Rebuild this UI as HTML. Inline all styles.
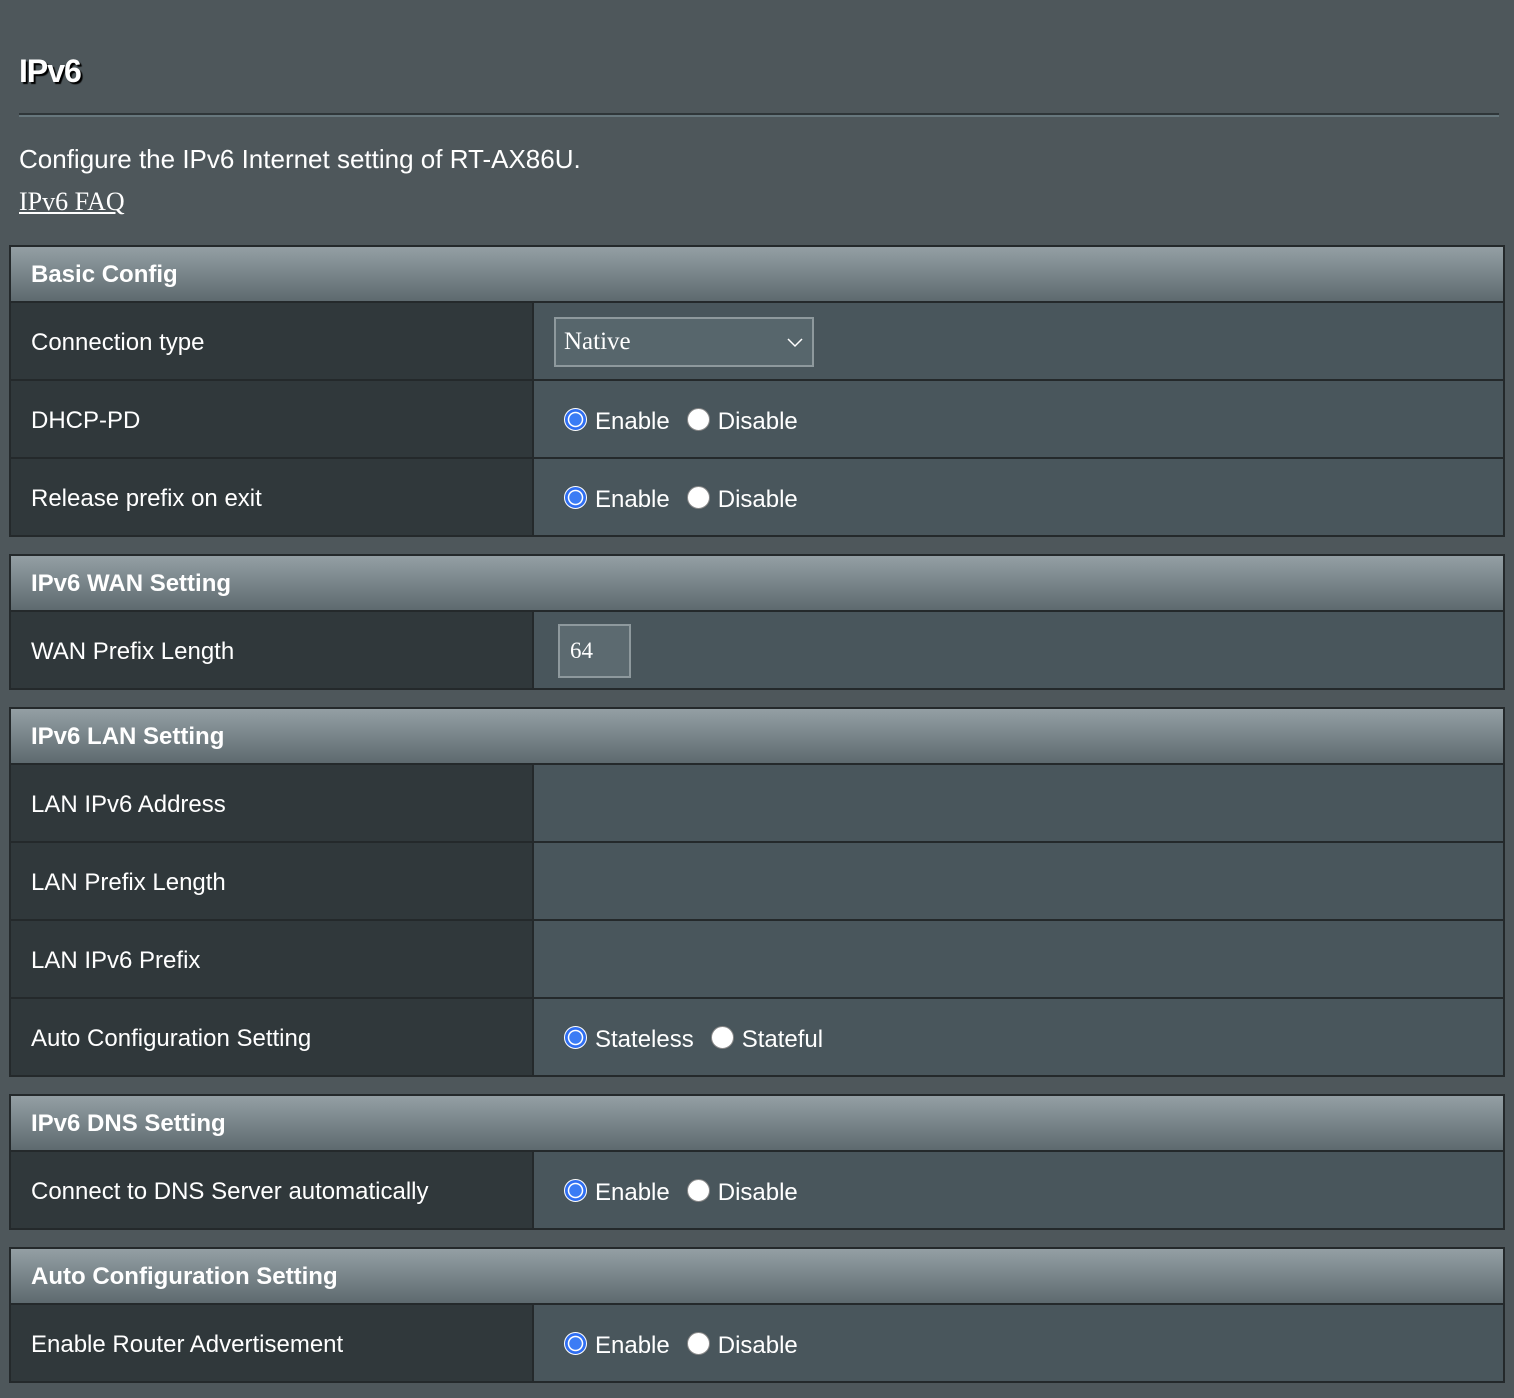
<!DOCTYPE html>
<html><head><style>
body{margin:0;background:#4e575b;font-family:"Liberation Sans",Arial,sans-serif;color:#fff;width:1514px;height:1398px;overflow:hidden;position:relative}
.title{position:absolute;left:19px;top:53px;font-size:32px;font-weight:bold;text-shadow:2px 2px 1px #000;letter-spacing:-1px}
.hr{position:absolute;left:19px;top:113px;width:1480px;height:2px;background:#2f3639;border-bottom:2px solid #67777d}
.desc{position:absolute;left:19px;top:144px;font-size:26px}
.faq{position:absolute;left:19px;top:187px;font-size:26px;font-family:"Liberation Serif",serif;text-decoration:underline;color:#fff}
.tbl{position:absolute;left:9px;width:1492px;border:2px solid #24292b;background:#24292b}
.hd{height:54px;background:linear-gradient(#949fa4,#5e6a6f);font-weight:bold;font-size:24px;line-height:56px;padding-left:20px;margin-bottom:2px}
.row{height:76px;display:flex;margin-bottom:2px}
.row:last-child{margin-bottom:0}
.l{width:501px;background:#30383b;font-size:24px;line-height:79px;padding-left:20px;margin-right:2px}
.r{flex:1;background:#49565c;position:relative;font-size:24px}
.rad{position:absolute;top:23px;left:30px;display:flex;align-items:center;height:36px}
.c{width:23px;height:23px;border-radius:50%;background:#fff;border:1px solid #888;margin-right:8px;margin-top:-6px;box-sizing:border-box}
.c.on{background:radial-gradient(circle,#3b7cf5 0 6px,#fff 6.5px 7.5px,#2f6ef2 8px);border:1px solid #fff}
.lb{margin-right:17px}
.sel{position:absolute;left:20px;top:14px;width:260px;height:50px;border:2px solid #8e999d;background:#57666c;box-sizing:border-box;font-family:"Liberation Serif",serif;font-size:25px;line-height:46px;padding-left:8px}
.in{position:absolute;left:24px;top:12px;width:73px;height:54px;border:2px solid #8e999d;background:#5c6a70;box-sizing:border-box;font-family:"Liberation Serif",serif;font-size:23px;line-height:50px;padding-left:10px}
</style></head><body>
<div class="title">IPv6</div>
<div class="hr"></div>
<div class="desc">Configure the IPv6 Internet setting of RT-AX86U.</div>
<div class="faq">IPv6 FAQ</div>

<div class="tbl" style="top:245px">
<div class="hd">Basic Config</div>
<div class="row"><div class="l">Connection type</div><div class="r"><div class="sel">Native<svg style="position:absolute;right:8px;top:18px" width="18" height="12"><path d="M2 2l7 7 7-7" stroke="#fff" stroke-width="1.5" fill="none"/></svg></div></div></div>
<div class="row"><div class="l">DHCP-PD</div><div class="r"><div class="rad"><span class="c on"></span><span class="lb">Enable</span><span class="c"></span><span>Disable</span></div></div></div>
<div class="row"><div class="l">Release prefix on exit</div><div class="r"><div class="rad"><span class="c on"></span><span class="lb">Enable</span><span class="c"></span><span>Disable</span></div></div></div>
</div>

<div class="tbl" style="top:554px">
<div class="hd">IPv6 WAN Setting</div>
<div class="row"><div class="l">WAN Prefix Length</div><div class="r"><div class="in">64</div></div></div>
</div>

<div class="tbl" style="top:707px">
<div class="hd">IPv6 LAN Setting</div>
<div class="row"><div class="l">LAN IPv6 Address</div><div class="r"></div></div>
<div class="row"><div class="l">LAN Prefix Length</div><div class="r"></div></div>
<div class="row"><div class="l">LAN IPv6 Prefix</div><div class="r"></div></div>
<div class="row"><div class="l">Auto Configuration Setting</div><div class="r"><div class="rad"><span class="c on"></span><span class="lb">Stateless</span><span class="c"></span><span>Stateful</span></div></div></div>
</div>

<div class="tbl" style="top:1094px">
<div class="hd">IPv6 DNS Setting</div>
<div class="row"><div class="l">Connect to DNS Server automatically</div><div class="r"><div class="rad"><span class="c on"></span><span class="lb">Enable</span><span class="c"></span><span>Disable</span></div></div></div>
</div>

<div class="tbl" style="top:1247px">
<div class="hd">Auto Configuration Setting</div>
<div class="row"><div class="l">Enable Router Advertisement</div><div class="r"><div class="rad"><span class="c on"></span><span class="lb">Enable</span><span class="c"></span><span>Disable</span></div></div></div>
</div>
</body></html>
